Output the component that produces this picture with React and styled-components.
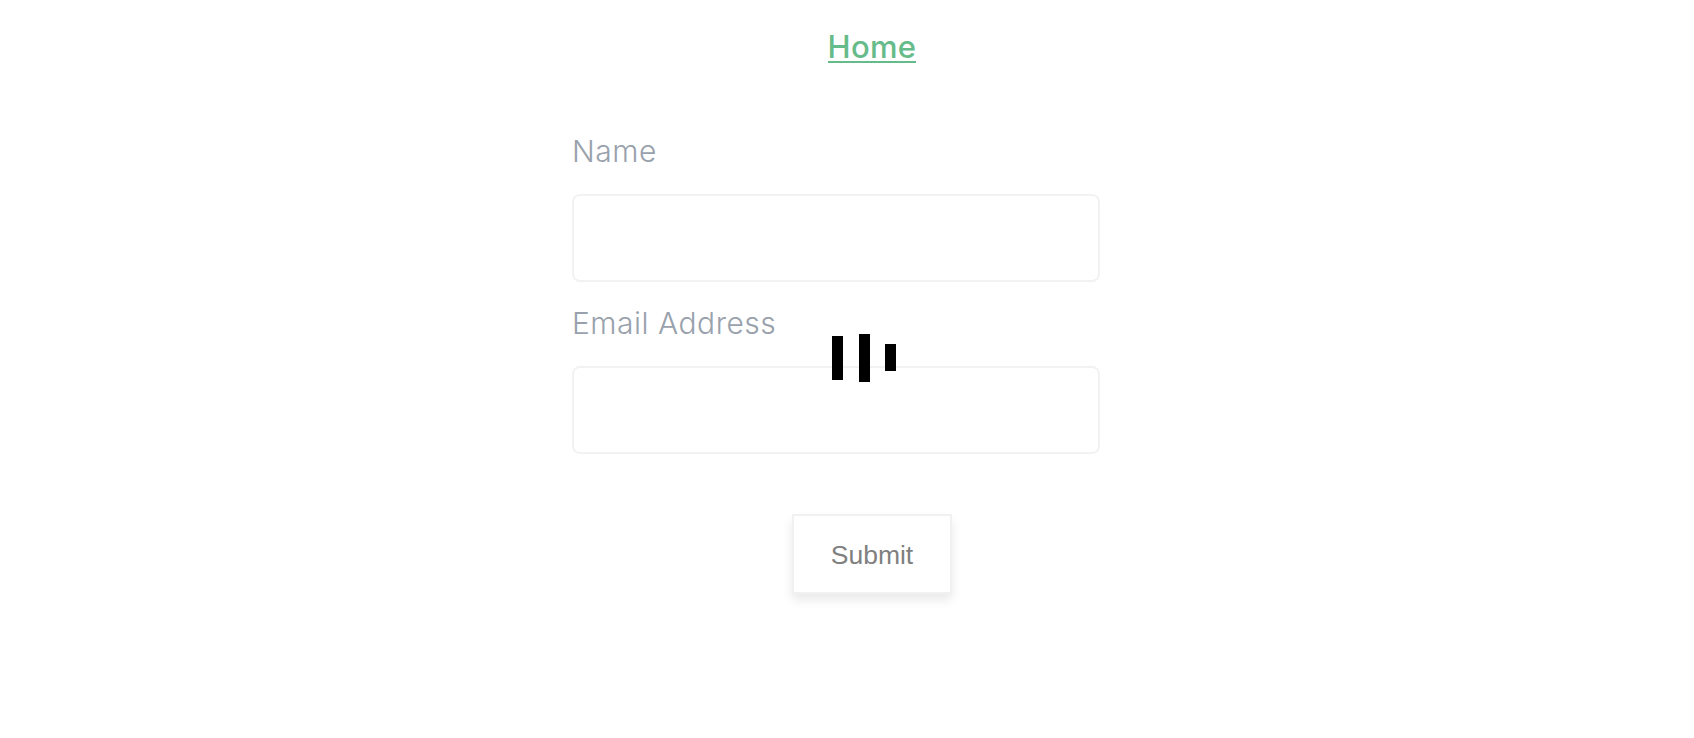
import React from 'react';
import styled, { createGlobalStyle } from 'styled-components';

const GlobalStyle = createGlobalStyle`
    html, body {
        margin: 0;
        background: #fff;
    }
    body {
        font-family: "Inter", "Lato", sans-serif;
    }
`;

const Page = styled.div`
    position: relative;
    min-height: 738px;
    padding-left: 50px;
    box-sizing: border-box;
`;

const Container = styled.div`
    width: 600px;
    margin: 0 auto;
`;

const Nav = styled.nav`
    display: flex;
    justify-content: center;
    padding-top: 28px;
    height: 110px;
    box-sizing: border-box;
`;

const HomeLink = styled.a`
    height: 33px;
    color: #66bb8a;
    font-size: 31px;
    font-weight: 500;
    letter-spacing: 0.3px;
    line-height: 38px;
    text-decoration: none;
    border-bottom: 2px solid #66bb8a;
`;

const Form = styled.form`
    display: flex;
    flex-direction: column;
`;

const Label = styled.label`
    display: block;
    height: 84px;
    padding-top: 23px;
    box-sizing: border-box;
    color: #98a1ac;
    font-size: 30px;
    font-weight: 300;
    letter-spacing: 0.5px;
    line-height: 36px;
`;

const Input = styled.input`
    display: block;
    width: 528px;
    height: 88px;
    box-sizing: border-box;
    background: #fff;
    border: 2px solid #f1f2f4;
    border-radius: 8px;
    outline: none;
`;

const Actions = styled.div`
    display: flex;
    justify-content: center;
    margin-top: 60px;
`;

const SubmitButton = styled.button`
    width: 160px;
    height: 80px;
    padding-top: 3px;
    background: #fff;
    border: 2px solid #f1f1f1;
    box-shadow: 0 6px 10px rgba(0, 0, 0, 0.09);
    color: #808080;
    font-family: "Liberation Sans", Arial, sans-serif;
    font-size: 26.5px;
`;

const Loader = styled.div`
    position: absolute;
    top: 334px;
    left: 832px;
    display: flex;
    align-items: flex-start;
    gap: 15.4px;
`;

const Bar = styled.span`
    display: block;
    width: 11.2px;
    height: ${props => props.$height}px;
    margin-top: ${props => props.$offset}px;
    background: #000;
`;

function App() {
    return (
        <Page>
            <GlobalStyle />
            <Container>
                <Nav>
                    <HomeLink href="#">Home</HomeLink>
                </Nav>
                <Form onSubmit={e => e.preventDefault()}>
                    <Label htmlFor="name">Name</Label>
                    <Input id="name" type="text" />
                    <Label htmlFor="email">Email Address</Label>
                    <Input id="email" type="email" />
                    <Actions>
                        <SubmitButton type="submit">Submit</SubmitButton>
                    </Actions>
                </Form>
            </Container>
            <Loader>
                <Bar $height={43.5} $offset={2} />
                <Bar $height={47.5} $offset={0} />
                <Bar $height={26.7} $offset={10} />
            </Loader>
        </Page>
    );
}

export default App;
